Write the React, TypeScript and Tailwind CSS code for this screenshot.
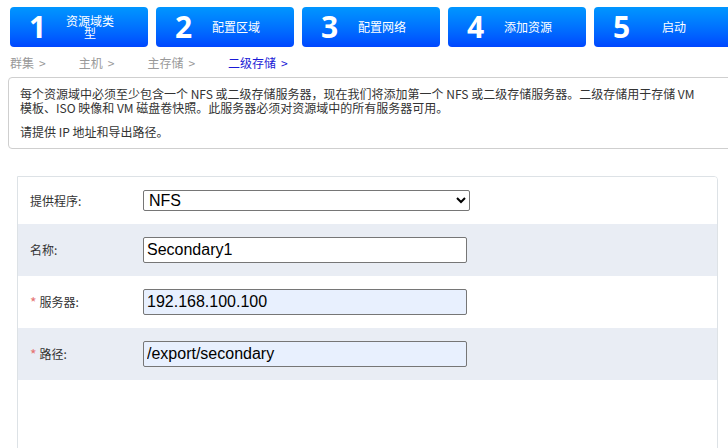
const STEPS = [
  { n: "1", label: "资源域类型" },
  { n: "2", label: "配置区域" },
  { n: "3", label: "配置网络" },
  { n: "4", label: "添加资源" },
  { n: "5", label: "启动" },
];

const CRUMBS = ["群集", "主机", "主存储"];

const CJK = "font-['Noto_Sans_CJK_SC','Noto_Sans',sans-serif]";

function StepButton({ n, label }: { n: string; label: string }) {
  return (
    <div className="relative flex h-[40px] w-[138px] shrink-0 items-center rounded-[4px] bg-gradient-to-b from-[#0096ff] to-[#0046ff] text-white">
      <span className="ml-[19px] w-[24px] font-['Open_Sans',sans-serif] text-[30px] font-bold leading-none">
        {n}
      </span>
      <span
        className={`absolute left-[52px] w-[56px] text-center text-[12px] leading-[12px] ${CJK}`}
      >
        {label}
      </span>
    </div>
  );
}

function Row({
  label,
  required,
  shaded,
  first,
  children,
}: {
  label: string;
  required?: boolean;
  shaded?: boolean;
  first?: boolean;
  children: React.ReactNode;
}) {
  return (
    <div
      className={`flex items-center pl-[12px] ${first ? "h-[47px]" : "h-[52px]"} ${
        shaded ? "bg-[#e9edf4]" : "bg-white"
      }`}
    >
      <div className={`flex w-[113px] items-center text-[12px] text-[#333] ${CJK}`}>
        {required && <span className="mr-[3px] text-[14px] leading-none text-[#e57373]">*</span>}
        {label}
      </div>
      {children}
    </div>
  );
}

const inputCls =
  "h-[26px] w-[324px] rounded-[2px] border border-[#767676] px-[3px] font-['Liberation_Sans',Arial,sans-serif] text-[16px] text-black outline-none";

export default function App() {
  return (
    <div className="h-[448px] w-[728px] overflow-hidden bg-white">
      <div className="flex gap-[8px] pl-[10px] pt-[7px]">
        {STEPS.map((s) => (
          <StepButton key={s.n} n={s.n} label={s.label} />
        ))}
      </div>

      <div className={`mt-[8px] flex pl-[10px] text-[12px] leading-[16px] ${CJK}`}>
        {CRUMBS.map((c) => (
          <span key={c} className="mr-[33px] text-[#999]">
            {c}
            <span className="ml-[5px]">&gt;</span>
          </span>
        ))}
        <span className="text-[#1a1ad6]">
          二级存储<span className="ml-[5px]">&gt;</span>
        </span>
      </div>

      <div
        className={`ml-[8px] mt-[6px] w-[740px] rounded-[4px] border border-[#cfcfcf] pb-[9px] pl-[11px] pr-[20px] pt-[9px] text-[12px] leading-[14px] text-[#333] ${CJK}`}
      >
        <p>
          每个资源域中必须至少包含一个 NFS 或二级存储服务器，现在我们将添加第一个 NFS 或二级存储服务器。二级存储用于存储 VM
          <br />
          模板、ISO 映像和 VM 磁盘卷快照。此服务器必须对资源域中的所有服务器可用。
        </p>
        <p className="mt-[10px]">请提供 IP 地址和导出路径。</p>
      </div>

      <div className="ml-[17px] mt-[27px] h-[300px] w-[701px] overflow-hidden rounded-tr-[4px] border border-[#dde2e6]">
        <Row label="提供程序:" first>
          <select
            defaultValue="NFS"
            className="h-[21px] w-[327px] rounded-[2px] border border-[#767676] bg-white pl-[1px] font-['Liberation_Sans',Arial,sans-serif] text-[16px] leading-[18px] text-black"
          >
            <option value="NFS">NFS</option>
          </select>
        </Row>
        <Row label="名称:" shaded>
          <input className={`${inputCls} bg-white`} defaultValue="Secondary1" />
        </Row>
        <Row label="服务器:" required>
          <input className={`${inputCls} bg-[#e8f0fe]`} defaultValue="192.168.100.100" />
        </Row>
        <Row label="路径:" required shaded>
          <input className={`${inputCls} bg-[#e8f0fe]`} defaultValue="/export/secondary" />
        </Row>
      </div>
    </div>
  );
}
